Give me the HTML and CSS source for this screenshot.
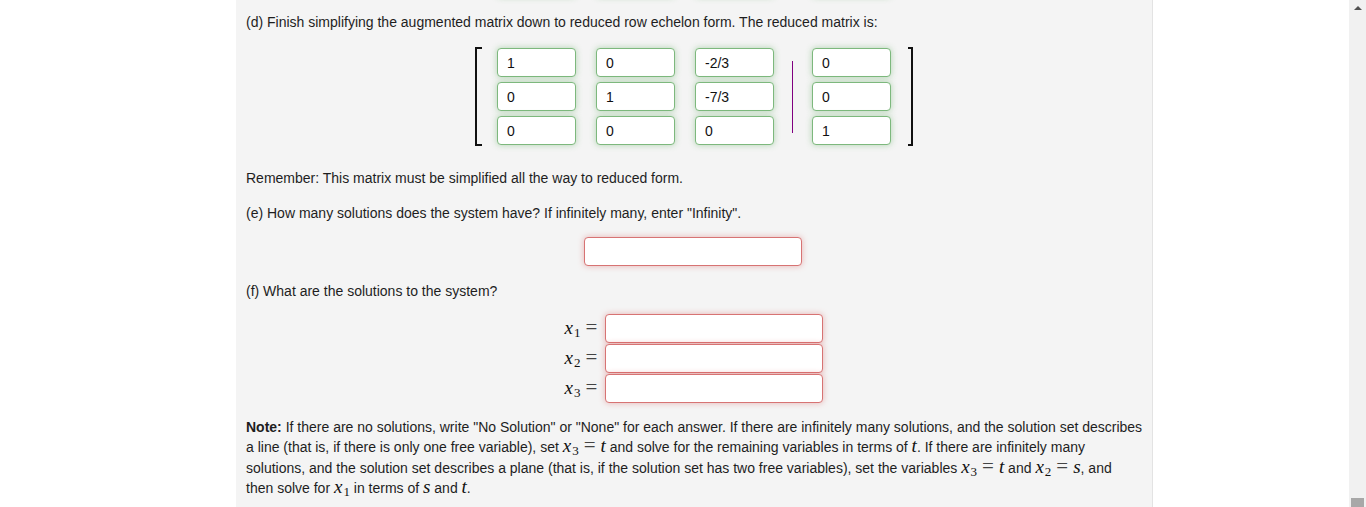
FILE: index.html
```html
<!DOCTYPE html>
<html>
<head>
<meta charset="utf-8">
<link rel="stylesheet" href="styles.css">
</head>
<body>
<div class="page">
  <div class="gutter"></div>
  <main class="panel">
    <div class="matrix prev">
      <span class="bracket left ghost"></span>
      <div class="col"><span class="cell ok"></span></div>
      <div class="col"><span class="cell ok"></span></div>
      <div class="col"><span class="cell ok"></span></div>
      <span class="sep ghost"></span>
      <div class="col"><span class="cell ok"></span></div>
      <span class="bracket right ghost"></span>
    </div>

    <p class="q first">(d) Finish simplifying the augmented matrix down to reduced row echelon form. The reduced matrix is:</p>

    <div class="matrix">
      <span class="bracket left"></span>
      <div class="col">
        <input class="cell ok" type="text" value="1">
        <input class="cell ok" type="text" value="0">
        <input class="cell ok" type="text" value="0">
      </div>
      <div class="col">
        <input class="cell ok" type="text" value="0">
        <input class="cell ok" type="text" value="1">
        <input class="cell ok" type="text" value="0">
      </div>
      <div class="col">
        <input class="cell ok" type="text" value="-2/3">
        <input class="cell ok" type="text" value="-7/3">
        <input class="cell ok" type="text" value="0">
      </div>
      <span class="sep"></span>
      <div class="col">
        <input class="cell ok" type="text" value="0">
        <input class="cell ok" type="text" value="0">
        <input class="cell ok" type="text" value="1">
      </div>
      <span class="bracket right"></span>
    </div>

    <p class="q remember">Remember: This matrix must be simplified all the way to reduced form.</p>

    <p class="q">(e) How many solutions does the system have? If infinitely many, enter "Infinity".</p>

    <div class="center-row">
      <input class="answer bad" type="text" value="">
    </div>

    <p class="q">(f) What are the solutions to the system?</p>

    <div class="solutions">
      <span class="lbl"><span class="mi">x</span><span class="sub">1</span><span class="eq">=</span></span>
      <input class="answer bad" type="text" value="">
      <span class="lbl"><span class="mi">x</span><span class="sub">2</span><span class="eq">=</span></span>
      <input class="answer bad" type="text" value="">
      <span class="lbl"><span class="mi">x</span><span class="sub">3</span><span class="eq">=</span></span>
      <input class="answer bad" type="text" value="">
    </div>

    <p class="note"><b>Note:</b> If there are no solutions, write "No Solution" or "None" for each answer. If there are infinitely many solutions, and the solution set describes<br>a line (that is, if there is only one free variable), set <span class="mi">x</span><span class="sub">3</span><span class="ieq">=</span><span class="mi">t</span> and solve for the remaining variables in terms of <span class="mi">t</span>. If there are infinitely many<br>solutions, and the solution set describes a plane (that is, if the solution set has two free variables), set the variables <span class="mi">x</span><span class="sub">3</span><span class="ieq">=</span><span class="mi">t</span> and <span class="mi">x</span><span class="sub">2</span><span class="ieq">=</span><span class="mi">s</span>, and<br>then solve for <span class="mi">x</span><span class="sub">1</span> in terms of <span class="mi">s</span> and <span class="mi">t</span>.</p>
  </main>
  <div class="filler"></div>
  <div class="scrollbar">
    <span class="arrow"></span>
    <span class="thumb"></span>
  </div>
</div>
</body>
</html>
```

FILE: styles.css
```css
html, body {
  margin: 0;
  padding: 0;
  height: 100%;
  overflow: hidden;
  background: #ffffff;
}

body {
  font-family: "Liberation Sans", Arial, sans-serif;
  font-size: 14px;
  color: #1e1e1e;
}

.page {
  display: flex;
  height: 507px;
}

.gutter {
  width: 236px;
  flex: none;
}

.panel {
  width: 896px;
  flex: none;
  padding: 0 10px;
  background: #f4f4f4;
  border-right: 1px solid #e3e3e3;
  display: flex;
  flex-direction: column;
}

.filler {
  flex: 1;
}

.scrollbar {
  width: 17px;
  flex: none;
  background: #f1f1f1;
  display: flex;
  flex-direction: column;
  align-items: center;
  justify-content: space-between;
}

.arrow {
  margin-top: 6px;
  width: 0;
  height: 0;
  border-left: 4px solid transparent;
  border-right: 4px solid transparent;
  border-bottom: 4px solid #505050;
}

.thumb {
  width: 13px;
  height: 9px;
  background: #a8a8a8;
}

.q {
  margin: 15px 0 0;
  line-height: 20px;
}

.q.remember {
  margin-top: 22px;
}

/* matrix */
.matrix {
  display: flex;
  justify-content: center;
  align-items: center;
  margin-top: 15px;
}

.matrix.prev {
  margin-top: -32px;
  height: 29px;
}

.col {
  display: flex;
  flex-direction: column;
  gap: 5px;
  margin-left: 20px;
}

.bracket {
  width: 5px;
  height: 95px;
  border: 2px solid #111111;
  flex: none;
}

.bracket.left {
  border-right: none;
}

.bracket.right {
  width: 3px;
  border-left: none;
  margin-left: 17px;
}

.bracket.ghost {
  border-color: transparent;
  height: 25px;
}

.bracket.left + .col {
  margin-left: 15px;
}

.sep {
  width: 1px;
  height: 72px;
  background: #800080;
  margin-left: 18px;
  margin-right: -1px;
  flex: none;
}

.sep.ghost {
  background: transparent;
  height: 29px;
}

.cell {
  display: block;
  box-sizing: border-box;
  width: 79px;
  height: 29px;
  margin: 0;
  padding: 0 9px;
  font-family: "Liberation Sans", Arial, sans-serif;
  font-size: 14px;
  color: #111111;
  background: #ffffff;
  border-radius: 4px;
  outline: none;
}

.ok {
  border: 1px solid #7db87d;
  box-shadow: 0 0 6px rgba(90, 170, 90, 0.45);
}

.bad {
  border: 1px solid #d77373;
  box-shadow: 0 0 6px rgba(215, 80, 80, 0.4);
}

.center-row {
  display: flex;
  justify-content: center;
  margin-top: 14px;
}

.answer {
  display: block;
  box-sizing: border-box;
  width: 218px;
  height: 29px;
  margin: 0;
  padding: 0 9px;
  font-family: "Liberation Sans", Arial, sans-serif;
  font-size: 14px;
  background: #ffffff;
  border-radius: 4px;
  outline: none;
}

.center-row .answer {
  margin-right: 2px;
}

.solutions {
  display: grid;
  grid-template-columns: auto 218px;
  column-gap: 8px;
  row-gap: 1px;
  justify-content: center;
  align-items: center;
  margin-top: 13px;
}

.lbl {
  justify-self: end;
  white-space: nowrap;
  line-height: 20px;
}

.mi {
  font-family: "Liberation Serif", "DejaVu Serif", serif;
  font-style: italic;
  font-size: 19px;
  line-height: 0;
  color: #111111;
}

.sub {
  font-family: "Liberation Serif", "DejaVu Serif", serif;
  font-size: 13px;
  line-height: 0;
  position: relative;
  top: 3px;
  margin-left: 1px;
  color: #111111;
}

.eq {
  font-family: "Liberation Serif", "DejaVu Serif", serif;
  font-size: 21px;
  line-height: 0;
  margin-left: 5px;
  color: #444444;
}

.ieq {
  font-family: "Liberation Serif", "DejaVu Serif", serif;
  font-size: 21px;
  line-height: 0;
  margin: 0 5px;
  color: #444444;
}

.note {
  margin: 14px 0 0;
  line-height: 20.3px;
  white-space: nowrap;
}

.note b {
  font-weight: bold;
}
```
